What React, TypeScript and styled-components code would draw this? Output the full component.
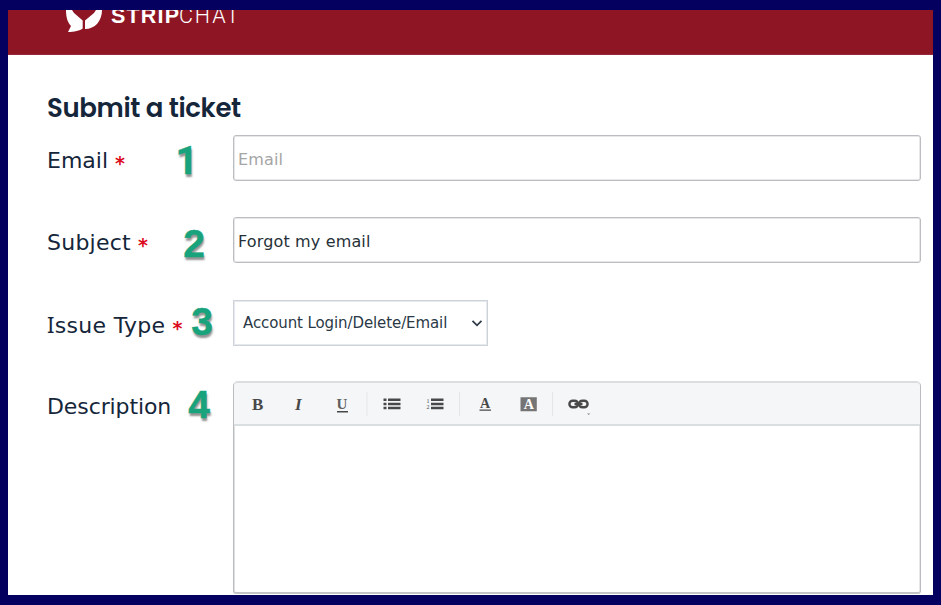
import React from 'react';
import styled, { createGlobalStyle } from 'styled-components';

const Global = createGlobalStyle`
  * { box-sizing: border-box; }
  body { margin: 0; background: #030060; }
`;

const Frame = styled.div`
  width: 941px;
  height: 605px;
  padding: 10px 8px;
  background: #030060;
  overflow: hidden;
`;

const Page = styled.div`
  height: 585px;
  background: #fff;
  overflow: hidden;
  color: #15263a;
  font-family: 'DejaVu Sans', Verdana, sans-serif;
`;

const Header = styled.header`
  height: 45px;
  background: #8e1624;
  border-bottom: 1px solid #98293a;
  overflow: hidden;
  padding-left: 57px;
`;

const Logo = styled.svg`
  display: block;
`;

const Form = styled.form`
  padding: 36px 12px 0 39px;
`;

const Title = styled.h1`
  margin: 0;
  height: 44px;
  font: 600 26px/34px Poppins, Inter, sans-serif;
  font-feature-settings: 'cv11';
  letter-spacing: -0.38px;
  white-space: nowrap;
`;

const Row = styled.div<{ $height?: number }>`
  display: grid;
  grid-template-columns: 186px 1fr;
  height: ${(p) => p.$height ?? 82}px;
`;

const LabelCell = styled.div`
  display: flex;
  align-items: flex-start;
  height: 50px;
`;

const Label = styled.label<{ $spacing?: number }>`
  height: 52px;
  font: 22px/52px Verdana, 'DejaVu Sans', sans-serif;
  letter-spacing: ${(p) => p.$spacing ?? 0}px;
  white-space: nowrap;
`;

const SerifInitial = styled.span`
  font-family: 'Noto Sans', sans-serif;
  line-height: 1;
`;

const Required = styled.span`
  margin-left: 7px;
  color: #dc0d20;
  font: 700 19px/56px 'DejaVu Sans', sans-serif;
`;

const Step = styled.span<{ $right: number; $top: number; $face?: string }>`
  margin: ${(p) => p.$top}px ${(p) => p.$right}px 0 auto;
  color: #18a37c;
  font: 700 39px/46px ${(p) => p.$face ?? "'Liberation Sans'"}, Arial, sans-serif;
  -webkit-text-stroke: 0.4px #18a37c;
  text-shadow: 1px 3px 2px rgba(40, 40, 40, 0.5);
`;

const Input = styled.input`
  width: 100%;
  height: 46px;
  padding: 3px 5px 0 4px;
  border: 1px solid #bcbdc0;
  border-radius: 3px;
  box-shadow: inset 0 0 0 1px #e7e7e9;
  outline: 0;
  background: #fff;
  color: #263038;
  font: 16px 'DejaVu Sans', sans-serif;
  letter-spacing: 0.15px;
  &::placeholder { color: #a5a5a5; opacity: 1; }
`;

const Select = styled.div`
  display: flex;
  align-items: center;
  justify-content: space-between;
  width: 255px;
  height: 46px;
  padding: 0 3px 0 9px;
  border: 1px solid #cdd3d9;
  box-shadow: inset 0 0 0 1px #e6e9ed;
  color: #2b3947;
  font: 15px 'DejaVu Sans', sans-serif;
  letter-spacing: -0.1px;
  white-space: nowrap;
`;

const Editor = styled.div`
  height: 213px;
  border: 1px solid #bbbcc0;
  border-top: 2px solid #dadedf;
  border-bottom: 2px solid #c4c5c9;
  border-radius: 5px 5px 3px 3px;
  box-shadow: inset 1px 0 #dfe0e2, inset -1px 0 #e6e7e8;
  overflow: hidden;
`;

const Toolbar = styled.div`
  height: 43px;
  padding-left: 1px;
  background: #f5f6f8;
  border-bottom: 2px solid #d9dee1;
`;

const ToolIcons = styled.svg`
  display: block;
  font-family: 'Liberation Serif', 'Times New Roman', serif;
`;

export default function App() {
  return (
    <>
      <Global />
      <Frame>
        <Page>
          <Header>
            <Logo width="180" height="24" viewBox="0 0 180 24">
              <path fill="#fff" d="M1 0H7L9 3L17.7 10.5V18.5C15 20.5 9 22 3 22L6 16C3 13 1 8 1 0Z" />
              <path fill="#fff" d="M20 19V10.5L29 3L31 0H37C37 11 30 19 20 19Z" />
              <text x="46" y="12.8" fill="#fff" fontFamily="'Liberation Sans', Arial, sans-serif" fontSize="21.5" fontWeight="700" textLength="68">STRIP</text>
              <text x="114" y="12.8" fill="#fff" fontFamily="Roboto, sans-serif" fontSize="21.5" fontWeight="300" textLength="60">CHAT</text>
            </Logo>
          </Header>
          <Form>
            <Title>Submit a ticket</Title>
            <Row>
              <LabelCell>
                <Label>Email</Label><Required>*</Required>
                <Step $right={35} $top={3} $face="Roboto">1</Step>
              </LabelCell>
              <Input placeholder="Email" />
            </Row>
            <Row $height={83}>
              <LabelCell>
                <Label $spacing={0.25}>Subject</Label><Required>*</Required>
                <Step $right={28} $top={4}>2</Step>
              </LabelCell>
              <Input defaultValue="Forgot my email" />
            </Row>
            <Row $height={81}>
              <LabelCell>
                <Label $spacing={0.3}><SerifInitial>I</SerifInitial>ssue Type</Label><Required>*</Required>
                <Step $right={20} $top={-1}>3</Step>
              </LabelCell>
              <Select>
                <span>Account Login/Delete/Email</span>
                <svg width="14" height="14" viewBox="0 0 14 14" fill="none" stroke="#303c49" strokeWidth="1.8">
                  <path d="M2.5 4.8 7 9.3 11.5 4.8" />
                </svg>
              </Select>
            </Row>
            <Row $height={213}>
              <LabelCell>
                <Label $spacing={-0.1}>Description</Label>
                <Step $right={23} $top={1}>4</Step>
              </LabelCell>
              <Editor>
                <Toolbar>
                  <ToolIcons width="400" height="41" viewBox="235 383 400 41" fill="#484848">
                    <text x="252" y="410" fontSize="17" fontWeight="700">B</text>
                    <text x="295" y="410" fontSize="17" fontWeight="700" fontStyle="italic">I</text>
                    <text x="336.5" y="409" fontSize="15" fontWeight="700" fill="#606060">U</text>
                    <path d="M337 411h11v1.4h-11z" />
                    <path fill="#e3e6e8" d="M366.5 392h1v24h-1zM459 392h1v24h-1zM552 392h1v24h-1z" />
                    <path d="M383.5 398.5h3v2.6h-3zM383.5 402.7h3v2.6h-3zM383.5 406.7h3v2.6h-3zM388 398.5h12.5v2.6H388zM388 402.7h12.5v2.6H388zM388 406.7h12.5v2.6H388zM431 398.5h12.5v2.6H431zM431 402.7h12.5v2.6H431zM431 406.7h12.5v2.6H431z" />
                    <text x="426.5" y="402.5" fontSize="6">1</text>
                    <text x="426.5" y="408.5" fontSize="6">2</text>
                    <text x="480" y="408" fontSize="14" fontWeight="700">A</text>
                    <path d="M479.5 409.4h11.5v1.4h-11.5z" />
                    <path fill="#757575" d="M520.5 397.3h16.3v14h-16.3z" />
                    <text x="523.8" y="409" fontSize="14" fontWeight="700" fill="#fff">A</text>
                    <g fill="none" stroke="#484848" strokeWidth="2.4">
                      <rect x="569.4" y="400.7" width="8.6" height="6.6" rx="3.3" />
                      <rect x="579" y="400.7" width="8.6" height="6.6" rx="3.3" />
                      <path d="M574.5 404h8" />
                    </g>
                    <path fill="#888" d="M587 413.4h3.4l-1.7 1.6z" />
                  </ToolIcons>
                </Toolbar>
              </Editor>
            </Row>
          </Form>
        </Page>
      </Frame>
    </>
  );
}
